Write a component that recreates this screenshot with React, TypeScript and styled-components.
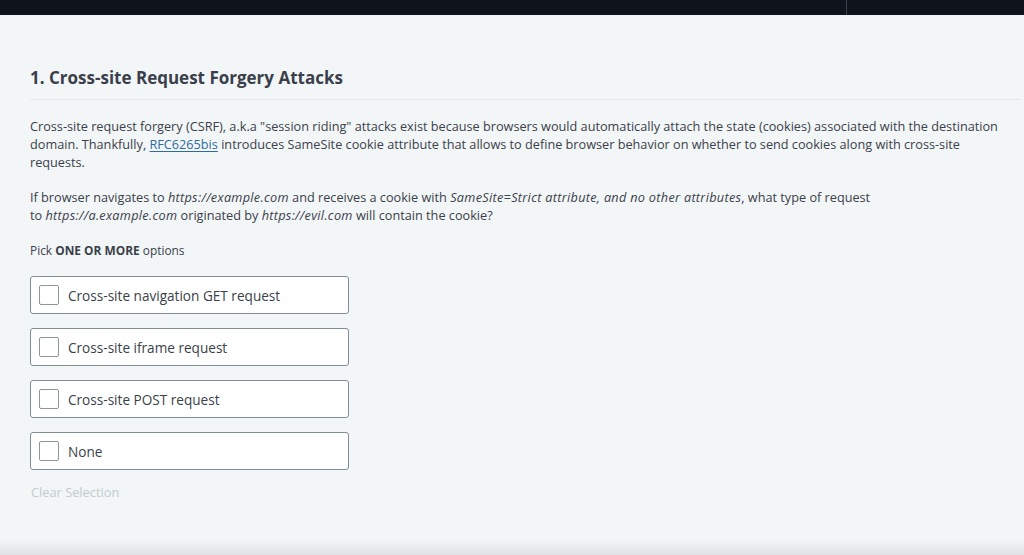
import React, { useState } from 'react';
import styled, { createGlobalStyle } from 'styled-components';

const Global = createGlobalStyle`
  html, body {
    margin: 0;
    padding: 0;
    background: #f2f6f7;
  }
  body {
    font-family: 'Open Sans', 'Noto Sans', sans-serif;
    color: #3a3f4a;
  }
`;

const Page = styled.div`
  width: 1024px;
  height: 555px;
  display: flex;
  flex-direction: column;
  overflow: hidden;
  position: relative;
  background: #f2f6f7;
`;

const TopBar = styled.div`
  height: 15px;
  flex-shrink: 0;
  background: #0f131c;
  display: flex;
  justify-content: flex-end;
`;

const TopBarRight = styled.div`
  width: 177px;
  border-left: 1px solid #3c424d;
`;

const Content = styled.div`
  padding: 51px 4px 0 30px;
  flex: 1;
`;

const Title = styled.h1`
  margin: 0;
  font-size: 17px;
  font-weight: 700;
  color: #3a3f4b;
  line-height: 24px;
  padding-bottom: 9px;
  border-bottom: 1px solid #e3e7ea;
`;

const Paragraph = styled.p`
  margin: 0;
  font-size: 12.7px;
  line-height: 18px;
  color: #3b404b;
  max-width: 985px;

  em {
    letter-spacing: 0.3px;
  }
`;

const Intro = styled(Paragraph)`
  margin-top: 17px;
`;

const Question = styled(Paragraph)`
  margin-top: 17px;
`;

const Link = styled.a`
  color: #2f6aa3;
  text-decoration: underline;
  text-underline-offset: 2px;
`;

const Hint = styled.div`
  margin-top: 17px;
  font-size: 11.9px;
  line-height: 18px;
  color: #3b404b;
`;

const Options = styled.div`
  margin-top: 17px;
  display: flex;
  flex-direction: column;
  gap: 14px;
  width: 319px;
`;

const Option = styled.label`
  height: 38px;
  box-sizing: border-box;
  background: #ffffff;
  border: 1px solid #7f8d95;
  border-radius: 3px;
  display: flex;
  align-items: center;
  padding-left: 8px;
  gap: 9px;
  cursor: pointer;
`;

const Box = styled.span<{ $on: boolean }>`
  width: 20px;
  height: 20px;
  box-sizing: border-box;
  border: 1px solid #8c979d;
  border-radius: 2px;
  background: ${(p) => (p.$on ? '#2f6aa3' : '#fff')};
  flex-shrink: 0;
`;

const OptionText = styled.span`
  font-size: 13.6px;
  color: #3a3f4a;
`;

const Clear = styled.div`
  margin-top: 13px;
  margin-left: 1px;
  font-size: 12.8px;
  color: #c3cbcf;
`;

const BottomShade = styled.div`
  position: absolute;
  left: 0;
  right: 0;
  bottom: 0;
  height: 16px;
  background: linear-gradient(to bottom, rgba(220, 224, 226, 0), rgba(220, 224, 226, 0.9));
`;

const choices = [
  'Cross-site navigation GET request',
  'Cross-site iframe request',
  'Cross-site POST request',
  'None',
];

const App = () => {
  const [picked, setPicked] = useState<number[]>([]);
  const toggle = (i: number) =>
    setPicked((p) => (p.includes(i) ? p.filter((x) => x !== i) : [...p, i]));

  return (
    <>
      <Global />
      <Page>
        <TopBar>
          <TopBarRight />
        </TopBar>
        <Content>
          <Title>1. Cross-site Request Forgery Attacks</Title>
          <Intro>
            Cross-site request forgery (CSRF), a.k.a "session riding" attacks exist because browsers
            would automatically attach the state (cookies) associated with the destination domain.
            Thankfully, <Link href="#">RFC6265bis</Link> introduces SameSite cookie attribute that
            allows to define browser behavior on whether to send cookies along with cross-site
            requests.
          </Intro>
          <Question>
            If browser navigates to <em>https://example.com</em> and receives a cookie with{' '}
            <em>SameSite=Strict attribute, and no other attributes</em>, what type of request
            <br />
            to <em>https://a.example.com</em> originated by <em>https://evil.com</em> will contain
            the cookie?
          </Question>
          <Hint>
            Pick <b>ONE OR MORE</b> options
          </Hint>
          <Options>
            {choices.map((c, i) => (
              <Option key={c} onClick={() => toggle(i)}>
                <Box $on={picked.includes(i)} />
                <OptionText>{c}</OptionText>
              </Option>
            ))}
          </Options>
          <Clear>Clear Selection</Clear>
        </Content>
        <BottomShade />
      </Page>
    </>
  );
};

export default App;
